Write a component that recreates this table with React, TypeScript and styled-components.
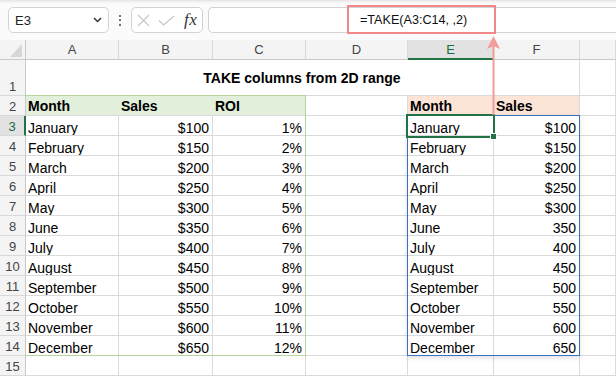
import React from 'react';
import styled, { createGlobalStyle } from 'styled-components';

const GlobalStyle = createGlobalStyle`
  html, body { margin: 0; padding: 0; background: #fff; }
  body { font-family: "Liberation Sans", Arial, sans-serif; overflow: hidden; }
  #root { width: 616px; height: 377px; overflow: hidden; }
`;

const Page = styled.div`
  position: relative;
  width: 616px;
  height: 377px;
  overflow: hidden;
  display: flex;
  flex-direction: column;
`;

const Toolbar = styled.div`
  height: 40px;
  flex: none;
  box-sizing: border-box;
  display: flex;
  align-items: flex-start;
  padding: 7px 0 0 8px;
  background: linear-gradient(#e2e2e2 0, #f4f4f4 2px, #fbfbfb 4px);
`;

const NameBox = styled.div`
  width: 101px;
  height: 26px;
  box-sizing: border-box;
  border: 1px solid #d3d3d3;
  border-radius: 5px;
  background: #fff;
  display: flex;
  align-items: center;
  justify-content: space-between;
  padding: 0 6px;
  font-size: 13px;
  color: #222;
`;

const Dots = styled.div`
  width: 22px;
  height: 26px;
  display: flex;
  flex-direction: column;
  align-items: center;
  justify-content: center;
  gap: 2.5px;
`;

const Dot = styled.span`
  width: 2px;
  height: 2px;
  border-radius: 1px;
  background: #444;
`;

const FxBox = styled.div`
  width: 72px;
  height: 26px;
  box-sizing: border-box;
  border: 1px solid #d3d3d3;
  border-radius: 5px;
  background: #fff;
  display: flex;
  align-items: center;
  padding-left: 5px;
  gap: 8px;
  margin-right: 5px;
`;

const FxText = styled.span`
  font-family: "Liberation Serif", "Times New Roman", serif;
  font-style: italic;
  font-size: 17px;
  color: #333;
  margin-left: 1px;
  letter-spacing: 0.5px;
`;

const FormulaBox = styled.div`
  flex: 1;
  height: 26px;
  box-sizing: border-box;
  border: 1px solid #d3d3d3;
  border-right: none;
  border-radius: 5px 0 0 5px;
  background: #fff;
  position: relative;
`;

const Annotation = styled.div`
  position: absolute;
  left: 138px;
  top: -3px;
  width: 149px;
  height: 29px;
  box-sizing: border-box;
  border: 2px solid #f28787;
  display: flex;
  align-items: center;
  padding-left: 11px;
  font-size: 12.6px;
  color: #111;
`;

const Arrow = styled.svg`
  position: absolute;
  left: 485px;
  top: 34px;
  width: 17px;
  height: 82px;
  z-index: 5;
`;

const Sheet = styled.div`
  position: relative;
  flex: 1;
  display: grid;
  grid-template-columns: 26px 93px 94px 93px 102px 86px 86px 1fr;
  grid-template-rows: 20px 36px repeat(14, 20px) 1fr;
`;

const Corner = styled.div`
  box-sizing: border-box;
  background: #f4f4f4;
  border-right: 1px solid #c8c8c8;
  border-bottom: 1px solid #c8c8c8;
  display: flex;
  justify-content: flex-end;
  align-items: flex-end;
  padding: 0 3px 2px 0;
`;

const CornerTriangle = styled.span`
  width: 12px;
  height: 13px;
  background: #d7d7d7;
  clip-path: polygon(100% 0, 100% 100%, 0 100%);
`;

const ColHeader = styled.div<{ $selected?: boolean }>`
  box-sizing: border-box;
  background: ${p => (p.$selected ? '#e2e2e2' : '#f4f4f4')};
  border-right: 1px solid #d9d9d9;
  border-bottom: ${p => (p.$selected ? '2px solid #217346' : '1px solid #c8c8c8')};
  display: flex;
  align-items: center;
  justify-content: center;
  font-size: 13px;
  color: ${p => (p.$selected ? '#1d6b40' : '#444')};
`;

const RowHeader = styled.div<{ $selected?: boolean }>`
  box-sizing: border-box;
  background: ${p => (p.$selected ? '#e2e2e2' : '#f4f4f4')};
  border-right: ${p => (p.$selected ? '2px solid #217346' : '1px solid #c8c8c8')};
  border-bottom: 1px solid #d9d9d9;
  display: flex;
  align-items: flex-end;
  justify-content: center;
  padding-bottom: 1px;
  font-size: 13px;
  line-height: 15px;
  color: ${p => (p.$selected ? '#1d6b40' : '#444')};
`;

const Cell = styled.div<{
  $align?: 'left' | 'right' | 'center';
  $bold?: boolean;
  $fill?: string;
  $joinRight?: boolean;
  $span?: number;
  $middle?: boolean;
}>`
  box-sizing: border-box;
  grid-column: ${p => (p.$span ? `span ${p.$span}` : 'auto')};
  background: ${p => p.$fill ?? '#fff'};
  border-right: 1px solid ${p => (p.$joinRight && p.$fill ? p.$fill : '#dadada')};
  border-bottom: 1px solid #dadada;
  display: flex;
  align-items: ${p => (p.$middle ? 'center' : 'flex-end')};
  justify-content: ${p =>
    p.$align === 'right' ? 'flex-end' : p.$align === 'center' ? 'center' : 'flex-start'};
  padding: 0 3px 0 2px;
  font-size: 14px;
  line-height: 14px;
  font-weight: ${p => (p.$bold ? 700 : 400)};
  color: #000;
  white-space: nowrap;
  overflow: hidden;
`;

const GreenRange = styled.div`
  position: absolute;
  left: 25px;
  top: 55px;
  width: 281px;
  height: 261px;
  box-sizing: border-box;
  border: 1px solid #b4d69c;
  border-left: none;
  pointer-events: none;
`;

const BlueRange = styled.div`
  position: absolute;
  left: 407px;
  top: 75px;
  width: 173px;
  height: 241px;
  box-sizing: border-box;
  border: 1px solid #3a6fc9;
  box-shadow: 0 2px 5px rgba(0, 0, 0, 0.12);
  pointer-events: none;
`;

const Selection = styled.div`
  position: absolute;
  left: 406px;
  top: 74px;
  width: 89px;
  height: 24px;
  box-sizing: border-box;
  border: 2px solid #217346;
  pointer-events: none;
`;

const Handle = styled.span`
  position: absolute;
  right: -4px;
  bottom: -4px;
  width: 7px;
  height: 7px;
  box-sizing: border-box;
  background: #217346;
  border: 1px solid #fff;
`;

const GREEN = '#e2efda';
const PEACH = '#fce4d6';

const months = [
  'January', 'February', 'March', 'April', 'May', 'June',
  'July', 'August', 'September', 'October', 'November', 'December',
];

const columns = ['A', 'B', 'C', 'D', 'E', 'F', ''];

export default function App() {
  return (
    <Page>
      <GlobalStyle />
      <Toolbar>
        <NameBox>
          <span>E3</span>
          <svg width="9" height="6" viewBox="0 0 9 6">
            <path d="M1 1 L4.5 4.5 L8 1" fill="none" stroke="#333" strokeWidth="1.5" />
          </svg>
        </NameBox>
        <Dots>
          <Dot />
          <Dot />
          <Dot />
        </Dots>
        <FxBox>
          <svg width="13" height="13" viewBox="0 0 13 13">
            <path d="M1 1 L12 12 M12 1 L1 12" stroke="#c6c6c6" strokeWidth="1.2" fill="none" />
          </svg>
          <svg width="17" height="11" viewBox="0 0 17 11">
            <path d="M1 5.5 L5.5 10 L16 1" stroke="#c6c6c6" strokeWidth="1.2" fill="none" />
          </svg>
          <FxText>fx</FxText>
        </FxBox>
        <FormulaBox>
          <Annotation>=TAKE(A3:C14, ,2)</Annotation>
        </FormulaBox>
      </Toolbar>

      <Arrow viewBox="0 0 17 82">
        <line x1="8.5" y1="10" x2="8.5" y2="81" stroke="#f49a9a" strokeWidth="2" />
        <path d="M8.5 2 L15 15 L8.5 12 L2 15 Z" fill="#f49a9a" />
      </Arrow>

      <Sheet>
        <Corner>
          <CornerTriangle />
        </Corner>
        {columns.map((c, i) => (
          <ColHeader key={`h${i}`} $selected={c === 'E'}>
            {c}
          </ColHeader>
        ))}

        <RowHeader>1</RowHeader>
        <Cell $span={6} $align="center" $bold $middle>
          TAKE columns from 2D range
        </Cell>
        <Cell />

        <RowHeader>2</RowHeader>
        <Cell $bold $middle $fill={GREEN} $joinRight>Month</Cell>
        <Cell $bold $middle $fill={GREEN} $joinRight>Sales</Cell>
        <Cell $bold $middle $fill={GREEN}>ROI</Cell>
        <Cell />
        <Cell $bold $middle $fill={PEACH} $joinRight>Month</Cell>
        <Cell $bold $middle $fill={PEACH}>Sales</Cell>
        <Cell />

        {months.map((m, i) => {
          const sales = 100 + 50 * i;
          return (
            <React.Fragment key={m}>
              <RowHeader $selected={i === 0}>{i + 3}</RowHeader>
              <Cell>{m}</Cell>
              <Cell $align="right">${sales}</Cell>
              <Cell $align="right">{i + 1}%</Cell>
              <Cell />
              <Cell>{m}</Cell>
              <Cell $align="right">{i < 5 ? `$${sales}` : `${sales}`}</Cell>
              <Cell />
            </React.Fragment>
          );
        })}

        <RowHeader>15</RowHeader>
        {columns.map((_, i) => (
          <Cell key={`r15-${i}`} />
        ))}

        <GreenRange />
        <BlueRange />
        <Selection>
          <Handle />
        </Selection>
      </Sheet>
    </Page>
  );
}
